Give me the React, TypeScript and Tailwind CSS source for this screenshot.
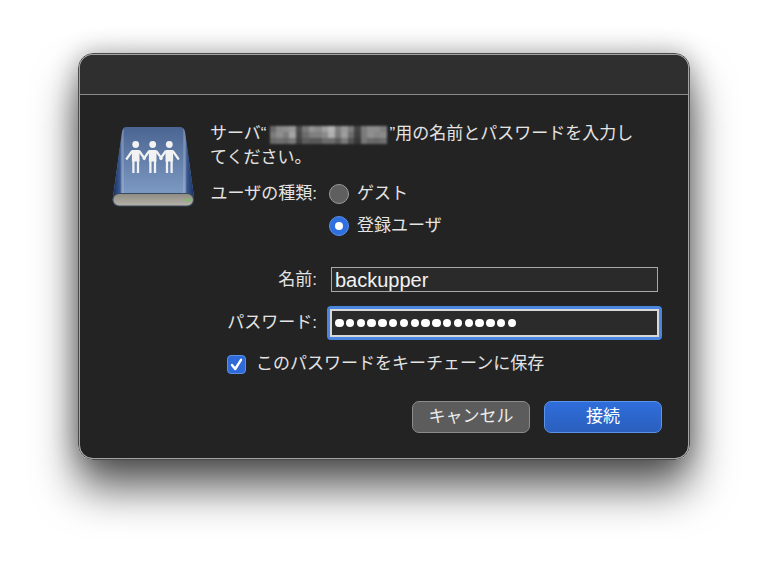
import React from "react";

const mosaic = [
  "#6a6a6a","#8a8a8a","#8f8f8f","#9a9a9a","#4c4c4c","#7a7a7a","#959595","#8a8a8a","#a0a0a0","#b5b5b5","#7f7f7f","#999999","#7d7d7d","#444444","#7c7c7c","#8d8d8d","#8d8d8d","#7f7f7f",
  "#7c7c7c","#8e8e8e","#7e7e7e","#a5a5a5","#484848","#6c6c6c","#7f7f7f","#7f7f7f","#8a8a8a","#b0b0b0","#7a7a7a","#9d9d9d","#6d6d6d","#3f3f3f","#7b7b7b","#8f8f8f","#868686","#8a8a8a",
  "#6a6a6a","#707070","#6a6a6a","#7a7a7a","#3f3f3f","#5c5c5c","#585858","#585858","#6c6c6c","#6c6c6c","#5a5a5a","#7a7a7a","#525252","#383838","#767676","#6a6a6a","#666666","#6e6e6e",
];

function DriveIcon() {
  const figures = [23.7, 40.7, 57.3];
  return (
    <svg width="84" height="84" viewBox="0 0 84 84" className="shrink-0">
      <defs>
        <linearGradient id="face" x1="0" y1="0" x2="0" y2="1">
          <stop offset="0" stopColor="#4a6591" />
          <stop offset="1" stopColor="#7f9cc6" />
        </linearGradient>
        <linearGradient id="side" x1="0" y1="0" x2="1" y2="0">
          <stop offset="0" stopColor="#16305f" />
          <stop offset="0.09" stopColor="#3c5a92" />
          <stop offset="0.14" stopColor="#ffffff" stopOpacity="0" />
          <stop offset="0.86" stopColor="#ffffff" stopOpacity="0" />
          <stop offset="0.91" stopColor="#3c5a92" />
          <stop offset="1" stopColor="#16305f" />
        </linearGradient>
        <linearGradient id="slot" x1="0" y1="0" x2="0" y2="1">
          <stop offset="0" stopColor="#8d8b83" />
          <stop offset="1" stopColor="#b6b3a9" />
        </linearGradient>
      </defs>
      <path d="M14 1 H68 Q72 1 73 6 L82 71 H1 L10 6 Q11 1 14 1 Z" fill="url(#face)" />
      <path d="M14 1 H68 Q72 1 73 6 L82 71 H1 L10 6 Q11 1 14 1 Z" fill="url(#side)" />
      <g fill="#f2f2f2" stroke="#f2f2f2">
        {figures.map((x) => (
          <g key={x}>
            <circle cx={x} cy={18.5} r={3.4} stroke="none" />
            <path d={`M${x - 3.8} 24 H${x + 3.8} V35.5 H${x - 3.8} Z`} stroke="none" />
            <path d={`M${x - 2.3} 34 V47 M${x + 2.3} 34 V47`} strokeWidth={2.3} fill="none" />
            <path d={`M${x - 3.5} 25 L${x - 9.5} 33.5 M${x + 3.5} 25 L${x + 9.5} 33.5`} strokeWidth={2.2} fill="none" />
          </g>
        ))}
      </g>
      <rect x="0.8" y="67.5" width="80.8" height="12.5" rx="6.25" fill="url(#slot)" stroke="#3a4a5f" strokeWidth="1.2" />
      <circle cx="76" cy="74" r="1.6" fill="#58d83c" />
    </svg>
  );
}

export default function App() {
  return (
    <div
      className="w-[768px] h-[564px] overflow-hidden bg-white pt-[53px] pl-[78px] text-[17px] leading-[24px] text-[#e4e4e4]"
      style={{ fontFamily: '"Liberation Sans","Noto Sans CJK JP",sans-serif' }}
    >
      <div className="w-[612px] h-[407px] rounded-[15px] border border-[#4a4a4a] shadow-[0_28px_44px_rgba(0,0,0,0.64),0_0_26px_rgba(0,0,0,0.3)]">
        <div className="h-full rounded-[14px] border border-[#a4a4a4] bg-[#232323] overflow-hidden">
          <div className="h-[40px] bg-[#2f2f2f] border-b border-[#8a8a8a]" />
          <div className="flex pl-[32px] pt-[31px]">
            <DriveIcon />
            <div className="-mt-[4px] ml-[14px] w-[452px]">
              <p className="w-[430px]">
                サーバ“
                <span className="mx-[3px] inline-grid translate-y-[4px] grid-cols-[repeat(18,6.5px)] grid-rows-[repeat(3,6px)] align-top blur-[1px]">
                  {mosaic.map((c, i) => (
                    <span key={i} style={{ backgroundColor: c }} />
                  ))}
                </span>
                ”用の名前とパスワードを入力してください。
              </p>

              <div className="mt-[12px] flex">
                <span className="w-[107px] text-right">ユーザの種類:</span>
                <div className="ml-[12px] flex flex-col gap-[8px]">
                  <div className="flex items-center gap-[8px]">
                    <span className="h-[20px] w-[20px] rounded-full border border-[#9a9a9a] bg-[#5f5f5f]" />
                    <span>ゲスト</span>
                  </div>
                  <div className="flex items-center gap-[8px]">
                    <span className="flex h-[20px] w-[20px] items-center justify-center rounded-full bg-[#2f6fdf] border border-[#5b8fe8]">
                      <span className="h-[8px] w-[8px] rounded-full bg-white" />
                    </span>
                    <span>登録ユーザ</span>
                  </div>
                </div>
              </div>

              <div className="mt-[29px] flex items-center">
                <span className="w-[107px] text-right">名前:</span>
                <div className="ml-[14px] flex h-[25px] w-[327px] items-center border border-[#a8a8a8] bg-[#2a2a2a] pl-[3px] text-[20px] text-[#f2f2f2]">
                  backupper
                </div>
              </div>

              <div className="mt-[14px] flex items-center">
                <span className="w-[107px] text-right">パスワード:</span>
                <div className="ml-[10px] h-[34px] w-[335px] rounded-[4px] bg-[#4a86e0] p-[3px]">
                  <div className="flex h-[28px] items-center gap-[2.3px] border-2 border-[#d8d8d8] bg-[#2b2b2b] pl-[3px]">
                    {Array.from({ length: 17 }).map((_, i) => (
                      <span key={i} className="h-[8.5px] w-[8.5px] rounded-full bg-white" />
                    ))}
                  </div>
                </div>
              </div>

              <div className="ml-[17px] mt-[12px] flex items-center gap-[10px]">
                <span className="flex h-[19px] w-[19px] items-center justify-center rounded-[4px] bg-[#2f6bd8] border border-[#5b8fe8]">
                  <svg width="13" height="13" viewBox="0 0 13 13" fill="none">
                    <path d="M2 7 L5.2 11 L11 1.8" stroke="white" strokeWidth="2.4" strokeLinecap="round" strokeLinejoin="round" />
                  </svg>
                </span>
                <span>このパスワードをキーチェーンに保存</span>
              </div>

              <div className="mt-[25px] flex justify-end gap-[14px]">
                <button className="h-[32px] w-[118px] rounded-[7px] border border-[#8c8c8c] bg-[#5c5c5c] text-[#ececec]">
                  キャンセル
                </button>
                <button className="h-[32px] w-[118px] rounded-[7px] border border-[#5c93ea] bg-gradient-to-b from-[#2f6edb] to-[#2a5fbd] text-white">
                  接続
                </button>
              </div>
            </div>
          </div>
        </div>
      </div>
    </div>
  );
}
